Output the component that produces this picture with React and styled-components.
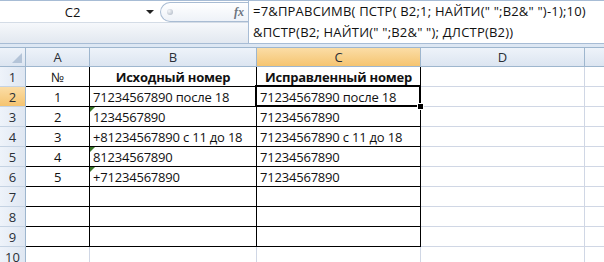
import React from 'react';
import styled, { createGlobalStyle } from 'styled-components';

const GlobalStyle = createGlobalStyle`
  html, body { margin: 0; padding: 0; background: #fff; }
  body { font-family: "Open Sans", "Liberation Sans", sans-serif; }
`;

const Window = styled.div`
  width: 604px;
  height: 262px;
  overflow: hidden;
  display: flex;
  flex-direction: column;
  background: #dde7f3;
`;

const RibbonEdge = styled.div`
  height: 5px;
  background: linear-gradient(#dbe6f4, #c4d6ec);
  border-bottom: 1px solid #a7bcd5;
`;

const FormulaBar = styled.div`
  display: grid;
  grid-template-columns: 248px 1fr;
  height: 42px;
  border-bottom: 1px solid #a7bcd5;
  background: #fff;
`;

const NameArea = styled.div`
  display: flex;
  flex-direction: column;
`;

const NameRow = styled.div`
  display: flex;
  height: 21px;
  background: #fff;
`;

const NameBox = styled.div`
  width: 160px;
  display: flex;
  align-items: center;
  font-size: 13px;
  color: #111;
`;

const NameText = styled.span`
  width: 145px;
  text-align: center;
`;

const DropArrow = styled.span`
  width: 0;
  height: 0;
  border-left: 4px solid transparent;
  border-right: 4px solid transparent;
  border-top: 4px solid #222;
  margin-left: 1px;
`;

const Capsule = styled.div`
  flex: 1;
  display: flex;
  align-items: center;
  justify-content: space-between;
  margin-top: 1px;
  border: 1px solid #a9bcd3;
  border-right: none;
  border-radius: 11px 0 0 11px;
  background: linear-gradient(#ffffff, #eef2f8);
  padding: 0 4px 0 6px;
`;

const Dot = styled.span`
  width: 6px;
  height: 6px;
  border-radius: 50%;
  background: radial-gradient(circle at 35% 35%, #f4f6f9, #a9b3c0);
`;

const Fx = styled.span`
  font-family: "Liberation Serif", serif;
  font-style: italic;
  font-weight: bold;
  font-size: 12px;
  color: #6c7480;
`;

const NameFill = styled.div`
  flex: 1;
  background: linear-gradient(#f6f8fb, #e2e8f0);
  border-top: 1px solid #d4dce6;
`;

const FormulaText = styled.div`
  border-left: 1px solid #a7bcd5;
  padding: 0 0 0 4px;
  font-size: 13px;
  line-height: 21px;
  color: #111;
  letter-spacing: 0.2px;
  white-space: pre;
`;

const Sheet = styled.div`
  margin-top: 3px;
  display: grid;
  grid-template-columns: 26px 64px 167px 164px 164px 40px;
  grid-auto-rows: 20px;
  background: #fff;
  font-size: 13px;
  color: #111;
`;

const HeaderCell = styled.div`
  display: flex;
  align-items: center;
  justify-content: center;
  border-right: 1px solid #9eb6ce;
  border-bottom: 1px solid #9eb6ce;
  border-top: 1px solid #9eb6ce;
  color: #2a2f36;
  background: ${({ $active }) =>
    $active ? 'linear-gradient(#fbdda6, #f5c470)' : 'linear-gradient(#eef3fa, #dce5f1)'};
`;

const Corner = styled(HeaderCell)`
  align-items: flex-end;
  justify-content: flex-end;
  padding: 0 3px 3px 0;
`;

const RowHead = styled.div`
  display: flex;
  align-items: center;
  justify-content: center;
  border-right: 1px solid #9eb6ce;
  border-bottom: 1px solid #c5d3e3;
  color: #2a2f36;
  background: ${({ $active }) =>
    $active ? 'linear-gradient(#fbdda6, #f5c470)' : 'linear-gradient(90deg, #eef3fa, #dfe7f2)'};
`;

const Cell = styled.div`
  position: relative;
  display: flex;
  align-items: center;
  justify-content: ${({ $align }) => ($align === 'center' ? 'center' : 'flex-start')};
  padding: 0 3px;
  white-space: nowrap;
  letter-spacing: -0.2px;
  font-weight: ${({ $bold }) => ($bold ? 'bold' : 'normal')};
  border-right: 1px solid ${({ $table }) => ($table ? '#000' : '#d0d7e5')};
  border-bottom: 1px solid ${({ $table }) => ($table ? '#000' : '#d0d7e5')};
  z-index: ${({ $selected }) => ($selected ? 2 : 'auto')};

  ${({ $mark }) =>
    $mark &&
    `&::before {
      content: '';
      position: absolute;
      left: 0;
      top: 0;
      border-top: 5px solid #3b7a2a;
      border-right: 5px solid transparent;
    }`}

  ${({ $selected }) =>
    $selected &&
    `&::after {
      content: '';
      position: absolute;
      left: -2px;
      top: -2px;
      right: -1px;
      bottom: -1px;
      border: 2px solid #000;
      box-shadow: inset 0 0 0 1px #fff;
      pointer-events: none;
    }`}
`;

const Handle = styled.span`
  position: absolute;
  right: -4px;
  bottom: -4px;
  width: 5px;
  height: 5px;
  background: #000;
  border: 1px solid #fff;
  z-index: 3;
`;

// E is only a sliver at the right edge, its letter lies outside the window
const columns = ['A', 'B', 'C', 'D', ''];

const rows = [
  { n: 1, a: '№', b: 'Исходный номер', c: 'Исправленный номер', bold: true },
  { n: 2, a: '1', b: '71234567890 после 18', c: '71234567890 после 18' },
  { n: 3, a: '2', b: '1234567890', c: '71234567890', mark: true },
  { n: 4, a: '3', b: '+81234567890 с 11 до 18', c: '71234567890 с 11 до 18' },
  { n: 5, a: '4', b: '81234567890', c: '71234567890', mark: true },
  { n: 6, a: '5', b: '+71234567890', c: '71234567890', mark: true },
  { n: 7 },
  { n: 8 },
  { n: 9 },
  { n: 10, empty: true },
];

const App = () => {
  return (
    <>
      <GlobalStyle />
      <Window>
        <RibbonEdge />
        <FormulaBar>
          <NameArea>
            <NameRow>
              <NameBox>
                <NameText>C2</NameText>
                <DropArrow />
              </NameBox>
              <Capsule>
                <Dot />
                <Fx>fx</Fx>
              </Capsule>
            </NameRow>
            <NameFill />
          </NameArea>
          <FormulaText>
            {'=7&ПРАВСИМВ( ПСТР( B2;1; НАЙТИ(" ";B2&" ")-1);10)\n&ПСТР(B2; НАЙТИ(" ";B2&" "); ДЛСТР(B2))'}
          </FormulaText>
        </FormulaBar>
        <Sheet>
          <Corner>
            <svg width="10" height="10" viewBox="0 0 10 10">
              <polygon points="10,0 10,10 0,10" fill="#b4c4d8" />
            </svg>
          </Corner>
          {columns.map((c, i) => (
            <HeaderCell key={i} $active={c === 'C'}>{c}</HeaderCell>
          ))}
          {rows.map((r) => {
            const table = !r.empty;
            return (
              <React.Fragment key={r.n}>
                <RowHead $active={r.n === 2}>{r.n}</RowHead>
                <Cell $table={table} $align="center">{r.a}</Cell>
                <Cell $table={table} $mark={r.mark} $bold={r.bold} $align={r.bold ? 'center' : 'left'}>{r.b}</Cell>
                <Cell $table={table} $bold={r.bold} $align={r.bold ? 'center' : 'left'} $selected={r.n === 2}>
                  {r.c}
                  {r.n === 2 && <Handle />}
                </Cell>
                <Cell />
                <Cell />
              </React.Fragment>
            );
          })}
        </Sheet>
      </Window>
    </>
  );
};

export default App;
